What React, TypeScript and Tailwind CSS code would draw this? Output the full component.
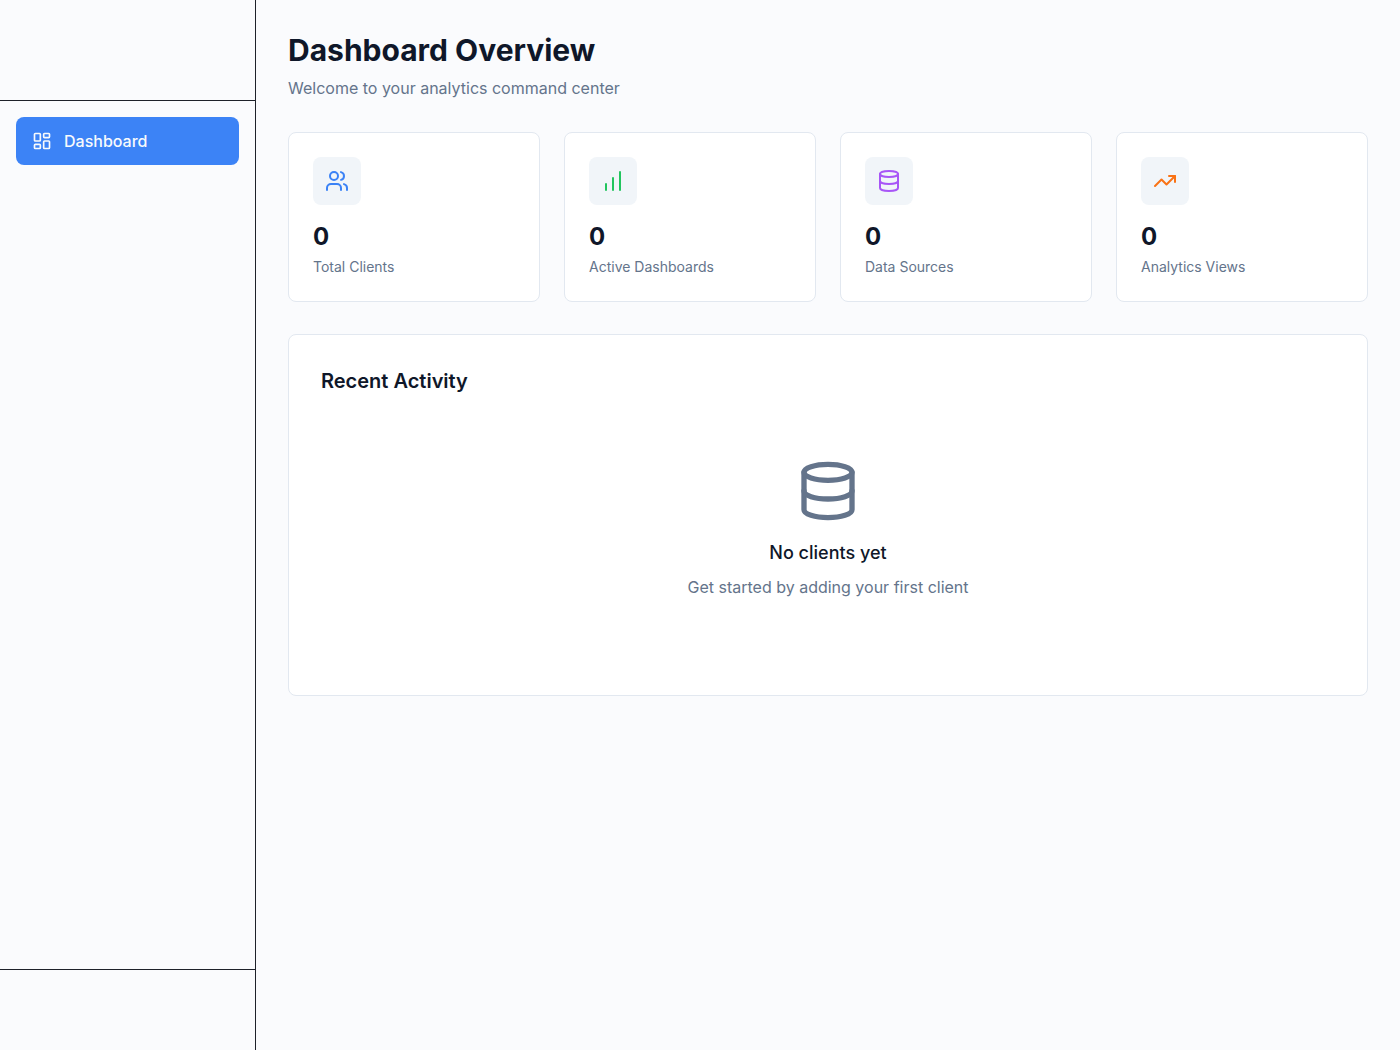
import { ChartNoAxesColumnIncreasing, Database, LayoutDashboard, TrendingUp, Users } from "lucide-react";
import type { LucideIcon } from "lucide-react";

type Stat = {
  label: string;
  value: number;
  icon: LucideIcon;
  color: string;
};

const stats: Stat[] = [
  { label: "Total Clients", value: 0, icon: Users, color: "text-[#3b82f6]" },
  {
    label: "Active Dashboards",
    value: 0,
    icon: ChartNoAxesColumnIncreasing,
    color: "text-[#22c55e]"
  },
  { label: "Data Sources", value: 0, icon: Database, color: "text-[#a855f7]" },
  {
    label: "Analytics Views",
    value: 0,
    icon: TrendingUp,
    color: "text-[#f97316]"
  }
];

function Sidebar() {
  return (
    <aside className="flex w-64 shrink-0 flex-col border-r border-[#1d2129]">
      <div className="h-[101px] border-b border-[#1d2129]" />
      <nav className="flex-1 p-4">
        <a
          href="#dashboard"
          className="flex items-center gap-3 rounded-lg bg-[#3c83f6] px-4 py-3 font-medium text-[#f8fafc]"
        >
          <LayoutDashboard className="size-5" />
          Dashboard
        </a>
      </nav>
      <div className="h-[81px] border-t border-[#1d2129]" />
    </aside>
  );
}

function StatCard({ label, value, icon: Icon, color }: Stat) {
  return (
    <div className="rounded-lg border border-[#e2e8f0] bg-white p-6">
      <div className="mb-4 flex size-12 items-center justify-center rounded-lg bg-[#f1f5f9]">
        <Icon className={`size-6 ${color}`} />
      </div>
      <h3 className="mb-1 text-2xl font-bold">{value}</h3>
      <p className="text-sm text-[#64748b]">{label}</p>
    </div>
  );
}

export default function App() {
  return (
    <div className="flex min-h-screen bg-[#fafbfd] font-['Inter',sans-serif] text-[#0f1729]">
      <Sidebar />
      <main className="flex-1 p-8">
        <div className="mb-8">
          <h1 className="mb-2 text-3xl font-bold">Dashboard Overview</h1>
          <p className="text-[#64748b]">
            Welcome to your analytics command center
          </p>
        </div>

        <div className="mb-8 grid grid-cols-1 gap-6 md:grid-cols-2 lg:grid-cols-4">
          {stats.map((stat) => (
            <StatCard key={stat.label} {...stat} />
          ))}
        </div>

        <section className="rounded-lg border border-[#e2e8f0] bg-white p-8">
          <h2 className="mb-6 text-xl font-semibold">Recent Activity</h2>
          <div className="flex flex-col items-center py-10 text-center">
            <Database className="mb-4 size-16 text-[#64748b]" />
            <h3 className="mb-2 text-lg font-medium">No clients yet</h3>
            <p className="mb-6 text-[#64748b]">
              Get started by adding your first client
            </p>
          </div>
        </section>
      </main>
    </div>
  );
}
